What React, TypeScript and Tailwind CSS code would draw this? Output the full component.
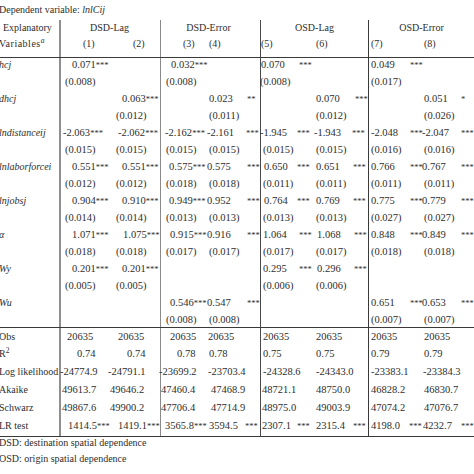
import React from "react";

type Spec = { t: string; c?: string; s?: string; w?: string } | null;

const BORDER = [
  "",
  "border-l-2 border-l-[#8f8f8f]",
  "",
  "border-l border-l-[#8a8a8a]",
  "",
  "border-l border-l-[#4a4a4a]",
  "",
  "border-l border-l-[#3a3a3a]",
  "",
];

const COLS = "grid grid-cols-[59px_48px_53px_38px_62px_52px_56px_52px_54px]";

function Num({ t }: { t: string }) {
  const m = t.match(/^(.*?)(\**)$/);
  const base = m ? m[1] : t;
  const stars = m ? m[2] : "";
  return (
    <>
      {base}
      {stars && <span className="text-[8.5px]">{stars}</span>}
    </>
  );
}

function Cell({ spec }: { spec: Spec }) {
  if (!spec) return null;
  if (spec.s) {
    return (
      <div className={spec.c ?? ""}>
        <span className={`inline-block ${spec.w ?? ""}`}>{spec.t}</span>
        <span className="text-[8.5px]">{spec.s}</span>
      </div>
    );
  }
  return (
    <div className={spec.c ?? ""}>
      <Num t={spec.t} />
    </div>
  );
}

function Row({
  h,
  label,
  italic,
  cells,
}: {
  h: string;
  label: React.ReactNode;
  italic?: boolean;
  cells: Spec[];
}) {
  return (
    <div className={`${COLS} ${h}`}>
      <div
        className={`whitespace-nowrap -ml-[1px] text-[10px] ${italic ? "italic" : ""}`}
      >
        {label}
      </div>
      {cells.map((c, i) => (
        <div
          key={i}
          className={`${BORDER[i + 1]} whitespace-nowrap flex text-[10.5px]`}
        >
          <Cell spec={c} />
        </div>
      ))}
    </div>
  );
}

const body: { label: React.ReactNode; cells: Spec[] }[] = [
  {
    label: "hcj",
    cells: [
      { t: "0.071***", c: "pl-[11px]" },
      null,
      { t: "0.032***", c: "pl-[10px]" },
      null,
      { t: "0.070", c: "pl-[0px]", s: "***", w: "w-[38px]" },
      null,
      { t: "0.049", c: "pl-[2px]", s: "***", w: "w-[39px]" },
      null,
    ],
  },
  {
    label: "",
    cells: [
      { t: "(0.008)", c: "pl-[4px]" },
      null,
      { t: "(0.008)", c: "pl-[5px]" },
      null,
      { t: "(0.008)", c: "-ml-[1px]" },
      null,
      { t: "(0.017)", c: "pl-[2px]" },
      null,
    ],
  },
  {
    label: "dhcj",
    cells: [
      null,
      { t: "0.063***", c: "pl-[15px]" },
      null,
      { t: "0.023", c: "pl-[11px]", s: "**", w: "w-[38px]" },
      null,
      { t: "0.070", c: "pl-[4px]", s: "***", w: "w-[39px]" },
      null,
      { t: "0.051", c: "pl-[4px]", s: "*", w: "w-[37px]" },
    ],
  },
  {
    label: "",
    cells: [
      null,
      { t: "(0.012)", c: "pl-[9px]" },
      null,
      { t: "(0.011)", c: "pl-[11px]" },
      null,
      { t: "(0.012)", c: "pl-[4px]" },
      null,
      { t: "(0.026)", c: "pl-[4px]" },
    ],
  },
  {
    label: "lndistanceij",
    cells: [
      { t: "-2.063***", c: "pl-[2px]" },
      { t: "-2.062***", c: "pl-[11px]" },
      { t: "-2.162***", c: "pl-[4px]" },
      { t: "-2.161", c: "pl-[9px]", s: "***", w: "w-[39px]" },
      { t: "-1.945", c: "-ml-[1px]", s: "***", w: "w-[37px]" },
      { t: "-1.943", c: "pl-[2px]", s: "***", w: "w-[38px]" },
      { t: "-2.048", c: "pl-[2px]", s: "***", w: "w-[39px]" },
      { t: "-2.047", c: "pl-[2px]", s: "***", w: "w-[39px]" },
    ],
  },
  {
    label: "",
    cells: [
      { t: "(0.015)", c: "pl-[4px]" },
      { t: "(0.015)", c: "pl-[9px]" },
      { t: "(0.015)", c: "pl-[5px]" },
      { t: "(0.015)", c: "pl-[11px]" },
      { t: "(0.015)", c: "pl-[2px]" },
      { t: "(0.015)", c: "pl-[4px]" },
      { t: "(0.016)", c: "pl-[2px]" },
      { t: "(0.016)", c: "pl-[4px]" },
    ],
  },
  {
    label: "lnlaborforcei",
    cells: [
      { t: "0.551***", c: "pl-[11px]" },
      { t: "0.551***", c: "pl-[15px]" },
      { t: "0.575***", c: "pl-[8px]" },
      { t: "0.575", c: "pl-[9px]", s: "***", w: "w-[40px]" },
      { t: "0.650", c: "pl-[3px]", s: "***", w: "w-[33px]" },
      { t: "0.651", c: "pl-[4px]", s: "***", w: "w-[37px]" },
      { t: "0.766", c: "pl-[2px]", s: "***", w: "w-[39px]" },
      { t: "0.767", c: "pl-[2px]", s: "***", w: "w-[39px]" },
    ],
  },
  {
    label: "",
    cells: [
      { t: "(0.012)", c: "pl-[4px]" },
      { t: "(0.012)", c: "pl-[9px]" },
      { t: "(0.018)", c: "pl-[5px]" },
      { t: "(0.018)", c: "pl-[11px]" },
      { t: "(0.011)", c: "pl-[2px]" },
      { t: "(0.011)", c: "pl-[4px]" },
      { t: "(0.011)", c: "pl-[2px]" },
      { t: "(0.011)", c: "pl-[4px]" },
    ],
  },
  {
    label: "lnjobsj",
    cells: [
      { t: "0.904***", c: "pl-[11px]" },
      { t: "0.910***", c: "pl-[15px]" },
      { t: "0.949***", c: "pl-[8px]" },
      { t: "0.952", c: "pl-[9px]", s: "***", w: "w-[40px]" },
      { t: "0.764", c: "pl-[3px]", s: "***", w: "w-[33px]" },
      { t: "0.769", c: "pl-[4px]", s: "***", w: "w-[37px]" },
      { t: "0.775", c: "pl-[2px]", s: "***", w: "w-[39px]" },
      { t: "0.779", c: "pl-[2px]", s: "***", w: "w-[39px]" },
    ],
  },
  {
    label: "",
    cells: [
      { t: "(0.014)", c: "pl-[4px]" },
      { t: "(0.014)", c: "pl-[9px]" },
      { t: "(0.013)", c: "pl-[5px]" },
      { t: "(0.013)", c: "pl-[11px]" },
      { t: "(0.013)", c: "pl-[2px]" },
      { t: "(0.013)", c: "pl-[4px]" },
      { t: "(0.027)", c: "pl-[2px]" },
      { t: "(0.027)", c: "pl-[4px]" },
    ],
  },
  {
    label: "α",
    cells: [
      { t: "1.071***", c: "pl-[11px]" },
      { t: "1.075***", c: "pl-[16px]" },
      { t: "0.915***", c: "pl-[9px]" },
      { t: "0.916", c: "pl-[9px]", s: "***", w: "w-[40px]" },
      { t: "1.064", c: "pl-[2px]", s: "***", w: "w-[36px]" },
      { t: "1.068", c: "pl-[5px]", s: "***", w: "w-[37px]" },
      { t: "0.848", c: "pl-[2px]", s: "***", w: "w-[39px]" },
      { t: "0.849", c: "pl-[2px]", s: "***", w: "w-[39px]" },
    ],
  },
  {
    label: "",
    cells: [
      { t: "(0.018)", c: "pl-[4px]" },
      { t: "(0.018)", c: "pl-[9px]" },
      { t: "(0.017)", c: "pl-[5px]" },
      { t: "(0.017)", c: "pl-[11px]" },
      { t: "(0.017)", c: "pl-[2px]" },
      { t: "(0.017)", c: "pl-[4px]" },
      { t: "(0.018)", c: "pl-[2px]" },
      { t: "(0.018)", c: "pl-[4px]" },
    ],
  },
  {
    label: "Wy",
    cells: [
      { t: "0.201***", c: "pl-[11px]" },
      { t: "0.201***", c: "pl-[15px]" },
      null,
      null,
      { t: "0.295", c: "pl-[2px]", s: "***", w: "w-[36px]" },
      { t: "0.296", c: "pl-[5px]", s: "***", w: "w-[37px]" },
      null,
      null,
    ],
  },
  {
    label: "",
    cells: [
      { t: "(0.005)", c: "pl-[4px]" },
      { t: "(0.005)", c: "pl-[9px]" },
      null,
      null,
      { t: "(0.006)", c: "pl-[2px]" },
      { t: "(0.006)", c: "pl-[4px]" },
      null,
      null,
    ],
  },
  {
    label: "Wu",
    cells: [
      null,
      null,
      { t: "0.546***", c: "pl-[9px]" },
      { t: "0.547", c: "pl-[9px]", s: "***", w: "w-[40px]" },
      null,
      null,
      { t: "0.651", c: "pl-[2px]", s: "***", w: "w-[39px]" },
      { t: "0.653", c: "pl-[2px]", s: "***", w: "w-[39px]" },
    ],
  },
];

const lastSE: Spec[] = [
  null,
  null,
  { t: "(0.008)", c: "pl-[5px]" },
  { t: "(0.008)", c: "pl-[11px]" },
  null,
  null,
  { t: "(0.007)", c: "pl-[2px]" },
  { t: "(0.007)", c: "pl-[4px]" },
];

const stats: { label: React.ReactNode; cells: Spec[] }[] = [
  {
    label: (
      <>
        R<sup>2</sup>
      </>
    ),
    cells: [
      { t: "0.74", c: "pl-[16px]" },
      { t: "0.74", c: "pl-[20px]" },
      { t: "0.78", c: "pl-[16px]" },
      { t: "0.78", c: "pl-[11px]" },
      { t: "0.75", c: "pl-[2px]" },
      { t: "0.75", c: "pl-[4px]" },
      { t: "0.79", c: "pl-[2px]" },
      { t: "0.79", c: "pl-[4px]" },
    ],
  },
  {
    label: "Log likelihood",
    cells: [
      { t: "-24774.9", c: "-ml-[1px]" },
      { t: "-24791.1", c: "pl-[1px]" },
      { t: "-23699.2", c: "-ml-[2px]" },
      { t: "-23703.4", c: "pl-[10px]" },
      { t: "-24328.6", c: "pl-[2px]" },
      { t: "-24343.0", c: "pl-[4px]" },
      { t: "-23383.1", c: "pl-[2px]" },
      { t: "-23384.3", c: "pl-[3px]" },
    ],
  },
  {
    label: "Akaike",
    cells: [
      { t: "49613.7", c: "pl-[1px]" },
      { t: "49646.2", c: "pl-[3px]" },
      { t: "47460.4", c: "pl-[0px]" },
      { t: "47468.9", c: "pl-[13px]" },
      { t: "48721.1", c: "pl-[1px]" },
      { t: "48750.0", c: "pl-[4px]" },
      { t: "46828.2", c: "pl-[2px]" },
      { t: "46830.7", c: "pl-[4px]" },
    ],
  },
  {
    label: "Schwarz",
    cells: [
      { t: "49867.6", c: "pl-[1px]" },
      { t: "49900.2", c: "pl-[3px]" },
      { t: "47706.4", c: "pl-[0px]" },
      { t: "47714.9", c: "pl-[13px]" },
      { t: "48975.0", c: "pl-[1px]" },
      { t: "49003.9", c: "pl-[4px]" },
      { t: "47074.2", c: "pl-[2px]" },
      { t: "47076.7", c: "pl-[4px]" },
    ],
  },
];

const obs: Spec[] = [
  { t: "20635", c: "pl-[6px]" },
  { t: "20635", c: "pl-[11px]" },
  { t: "20635", c: "pl-[9px]" },
  { t: "20635", c: "pl-[10px]" },
  { t: "20635", c: "pl-[2px]" },
  { t: "20635", c: "pl-[4px]" },
  { t: "20635", c: "pl-[2px]" },
  { t: "20635", c: "pl-[4px]" },
];

const lr: Spec[] = [
  { t: "1414.5***", c: "pl-[7px]" },
  { t: "1419.1***", c: "pl-[11px]" },
  { t: "3565.8***", c: "pl-[4px]" },
  { t: "3594.5", c: "pl-[11px]", s: "***", w: "w-[36px]" },
  { t: "2307.1", c: "pl-[1px]", s: "***", w: "w-[35px]" },
  { t: "2315.4", c: "pl-[4px]", s: "***", w: "w-[37px]" },
  { t: "4198.0", c: "pl-[2px]", s: "***", w: "w-[38px]" },
  { t: "4232.7", c: "pl-[3px]", s: "***", w: "w-[38px]" },
];

const nums: Spec[] = [
  { t: "(1)", c: "pl-[22px]" },
  { t: "(2)", c: "pl-[26px]" },
  { t: "(3)", c: "pl-[22px]" },
  { t: "(4)", c: "pl-[11px]" },
  { t: "(5)", c: "pl-[0px]" },
  { t: "(6)", c: "pl-[4px]" },
  { t: "(7)", c: "pl-[2px]" },
  { t: "(8)", c: "pl-[4px]" },
];

export default function App() {
  return (
    <div className="w-[474px] h-[474px] overflow-hidden bg-white text-[#2e2e2e] font-['Liberation_Serif',serif]">
      <div className="h-[20px] leading-[20px] text-[10px] whitespace-nowrap -ml-[1px]">
        Dependent variable: <span className="italic">lnlCij</span>
      </div>

      <div className={`${COLS} h-[16px] leading-[16px] text-[10px]`}>
        <div className="pl-[3px] whitespace-nowrap">Explanatory</div>
        <div className="col-span-2 border-l-2 border-l-[#8f8f8f] text-center pr-[2px]">
          DSD-Lag
        </div>
        <div className="col-span-2 border-l border-l-[#8a8a8a] text-center pr-[4px]">
          DSD-Error
        </div>
        <div className="col-span-2 border-l border-l-[#4a4a4a] text-center">
          OSD-Lag
        </div>
        <div className="col-span-2 border-l border-l-[#3a3a3a] text-center">
          OSD-Error
        </div>
      </div>

      <div
        className={`${COLS} h-[22px] leading-[16px] text-[10px] border-b border-b-[#3a3a3a]`}
      >
        <div className="-ml-[1px] tracking-[0.5px] whitespace-nowrap">
          Variables<sup className="italic">a</sup>
        </div>
        {nums.map((c, i) => (
          <div key={i} className={`${BORDER[i + 1]} whitespace-nowrap flex`}>
            <Cell spec={c} />
          </div>
        ))}
      </div>

      <div className="leading-[14px]">
        {body.map((r, i) => (
          <Row key={i} h="h-[17px]" label={r.label} italic cells={r.cells} />
        ))}
        <Row h="h-[14px]" label="" cells={lastSE} />
      </div>

      <div className="leading-[18px]">
        <div className="border-t border-t-[#3a3a3a]">
          <Row h="h-[17px]" label="Obs" cells={obs} />
        </div>
        {stats.map((r, i) => (
          <Row key={i} h="h-[18px]" label={r.label} cells={r.cells} />
        ))}
        <div className="border-b border-b-[#3a3a3a]">
          <Row h="h-[19px]" label="LR test" cells={lr} />
        </div>
      </div>

      <div className="pt-[1px] flex flex-col gap-[6px] text-[10px] leading-[10px] -ml-[1px] whitespace-nowrap">
        <div>DSD: destination spatial dependence</div>
        <div>OSD: origin spatial dependence</div>
      </div>
    </div>
  );
}
